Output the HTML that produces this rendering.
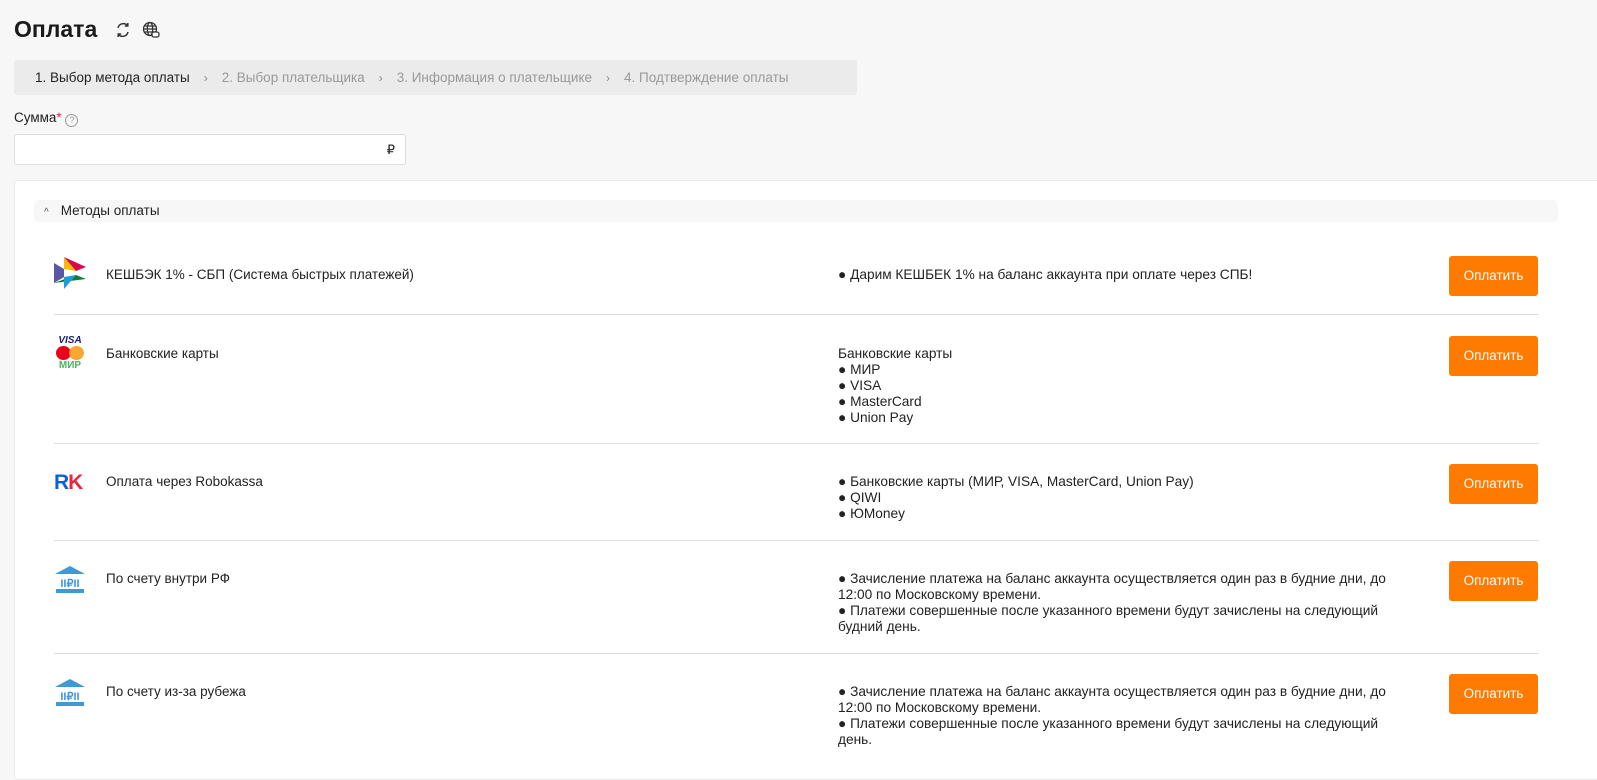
<!DOCTYPE html>
<html><head><meta charset="utf-8"><style>
*{margin:0;padding:0;box-sizing:border-box}
body{width:1597px;height:769px;overflow:hidden;background:#f7f7f7;font-family:"Liberation Sans",sans-serif;color:#222;position:relative;font-size:13px}
.abs{position:absolute}
h1{position:absolute;left:14px;top:16px;font-size:23px;font-weight:bold;color:#1a1a1a}
.steps{left:14px;top:60px;width:843px;height:35px;background:#ebebeb;border-radius:3px;font-size:13.5px;line-height:35px;padding-left:21px;white-space:nowrap;color:#999}
.steps b{font-weight:normal;color:#222}
.steps i{font-style:normal;margin:0 14px;color:#888;font-size:12px}
.card{left:14px;top:180px;width:1600px;height:600px;background:#fff;border:1px solid #ececec;border-radius:4px}
.hdr{left:34px;top:200px;width:1524px;height:22px;background:#f7f7f7;border-radius:4px;line-height:22px;font-size:13.5px;padding-left:10px}
.row{position:absolute;left:54px;width:1485px;border-bottom:1px solid #dedede}
.nm{position:absolute;left:52px;font-size:13.5px;white-space:nowrap}
.ds{position:absolute;left:784px;font-size:13.7px;line-height:16px;white-space:nowrap}
.btn{position:absolute;left:1395px;width:89px;height:40px;background:#ff7a00;color:#fff;border-radius:3px;text-align:center;line-height:40px;font-size:13.5px}
</style></head><body>
<h1>Оплата</h1>
<svg class="abs" style="left:114px;top:21px" width="18" height="18" viewBox="0 0 18 18" fill="none" stroke="#333" stroke-width="1.5"><path d="M4 7a5.5 5.5 0 0 1 9.5-2.5M14 11a5.5 5.5 0 0 1-9.5 2.5"/><path d="M13.8 2v3h-3M4.2 16v-3h3"/></svg>
<svg class="abs" style="left:142px;top:21px" width="18" height="18" viewBox="0 0 18 18" fill="none" stroke="#333" stroke-width="1.3"><circle cx="8" cy="8" r="6.5"/><ellipse cx="8" cy="8" rx="2.7" ry="6.5"/><path d="M1.5 8h13M2.5 5h11M2.5 11h11"/><rect x="10" y="11" width="7" height="5" rx="2" fill="#fff"/></svg>
<div class="abs steps"><b>1. Выбор метода оплаты</b><i>›</i>2. Выбор плательщика<i>›</i>3. Информация о плательщике<i>›</i>4. Подтверждение оплаты</div>
<div class="abs" style="left:14px;top:110px;font-size:13.5px">Сумма<span style="color:#e0245e">*</span> <span style="display:inline-block;width:13px;height:13px;border:1px solid #999;border-radius:50%;font-size:9px;line-height:11px;text-align:center;color:#999;vertical-align:-1px">?</span></div>
<div class="abs" style="left:14px;top:134px;width:392px;height:31px;background:#fff;border:1px solid #ddd;border-radius:3px"><span class="abs" style="right:10px;top:7px;font-size:13px">₽</span></div>
<div class="abs card"></div>
<div class="abs hdr"><span style="font-size:10px;color:#555;margin-right:12px">^</span>Методы оплаты</div>

<div class="row" style="top:235px;height:80px">
<svg class="abs" style="left:0;top:22px" width="32" height="32" viewBox="0 0 32 32"><path d="M0 6l6 10-6 10z" fill="#5b57a2"/><path d="M6 16l6-10-12 0z" fill="#1d9eda" opacity=".0"/><path d="M10 0l22 10-10 4z" fill="#d90751"/><path d="M10 0v12l12 2z" fill="#fab809"/><path d="M0 26l22-8 10 4z" fill="#0f7b3f"/><path d="M10 32V20l12-2z" fill="#1d9eda"/><path d="M0 6l10 6v8L0 26z" fill="#5b57a2"/></svg>
<div class="nm" style="top:32px">КЕШБЭК 1% - СБП (Система быстрых платежей)</div>
<div class="ds" style="top:32px">● Дарим КЕШБЕК 1% на баланс аккаунта при оплате через СПБ!</div>
<div class="btn" style="top:21px">Оплатить</div></div>

<div class="row" style="top:315px;height:129px">
<div class="abs" style="left:0;top:20px;width:32px;font-weight:bold;font-style:italic;color:#1a1f71;font-size:10px;text-align:center">VISA</div>
<div class="abs" style="left:2px;top:31px;width:15px;height:14px;border-radius:50%;background:#eb001b"></div><div class="abs" style="left:15px;top:31px;width:15px;height:14px;border-radius:50%;background:#f79e1b;opacity:.9"></div>
<div class="abs" style="left:0;top:45px;width:32px;font-weight:bold;color:#4db45e;font-size:10px;text-align:center">МИР</div>
<div class="nm" style="top:31px">Банковские карты</div>
<div class="ds" style="top:31px">Банковские карты<br>● МИР<br>● VISA<br>● MasterCard<br>● Union Pay</div>
<div class="btn" style="top:21px">Оплатить</div></div>

<div class="row" style="top:444px;height:97px">
<div class="abs" style="left:0;top:27px;font-weight:bold;font-size:21px;letter-spacing:-1px"><span style="color:#0a63d6">R</span><span style="color:#f1243f">K</span></div>
<div class="nm" style="top:30px">Оплата через Robokassa</div>
<div class="ds" style="top:30px">● Банковские карты (МИР, VISA, MasterCard, Union Pay)<br>● QIWI<br>● ЮMoney</div>
<div class="btn" style="top:20px">Оплатить</div></div>

<div class="row" style="top:541px;height:113px">
<svg class="abs" style="left:0;top:25px" width="32" height="27" viewBox="0 0 32 27"><path d="M16 0L31 8H1z" fill="#3d9ad9"/><rect x="2" y="23" width="28" height="4" fill="#3d9ad9"/><text x="16" y="21" font-size="11" font-weight="bold" fill="#3d9ad9" text-anchor="middle" font-family="Liberation Sans">II₽II</text></svg>
<div class="nm" style="top:30px">По счету внутри РФ</div>
<div class="ds" style="top:30px">● Зачисление платежа на баланс аккаунта осуществляется один раз в будние дни, до<br>12:00 по Московскому времени.<br>● Платежи совершенные после указанного времени будут зачислены на следующий<br>будний день.</div>
<div class="btn" style="top:20px">Оплатить</div></div>

<div class="row" style="top:654px;height:120px;border:0">
<svg class="abs" style="left:0;top:25px" width="32" height="27" viewBox="0 0 32 27"><path d="M16 0L31 8H1z" fill="#3d9ad9"/><rect x="2" y="23" width="28" height="4" fill="#3d9ad9"/><text x="16" y="21" font-size="11" font-weight="bold" fill="#3d9ad9" text-anchor="middle" font-family="Liberation Sans">II₽II</text></svg>
<div class="nm" style="top:30px">По счету из-за рубежа</div>
<div class="ds" style="top:30px">● Зачисление платежа на баланс аккаунта осуществляется один раз в будние дни, до<br>12:00 по Московскому времени.<br>● Платежи совершенные после указанного времени будут зачислены на следующий<br>день.</div>
<div class="btn" style="top:20px">Оплатить</div></div>
</body></html>
